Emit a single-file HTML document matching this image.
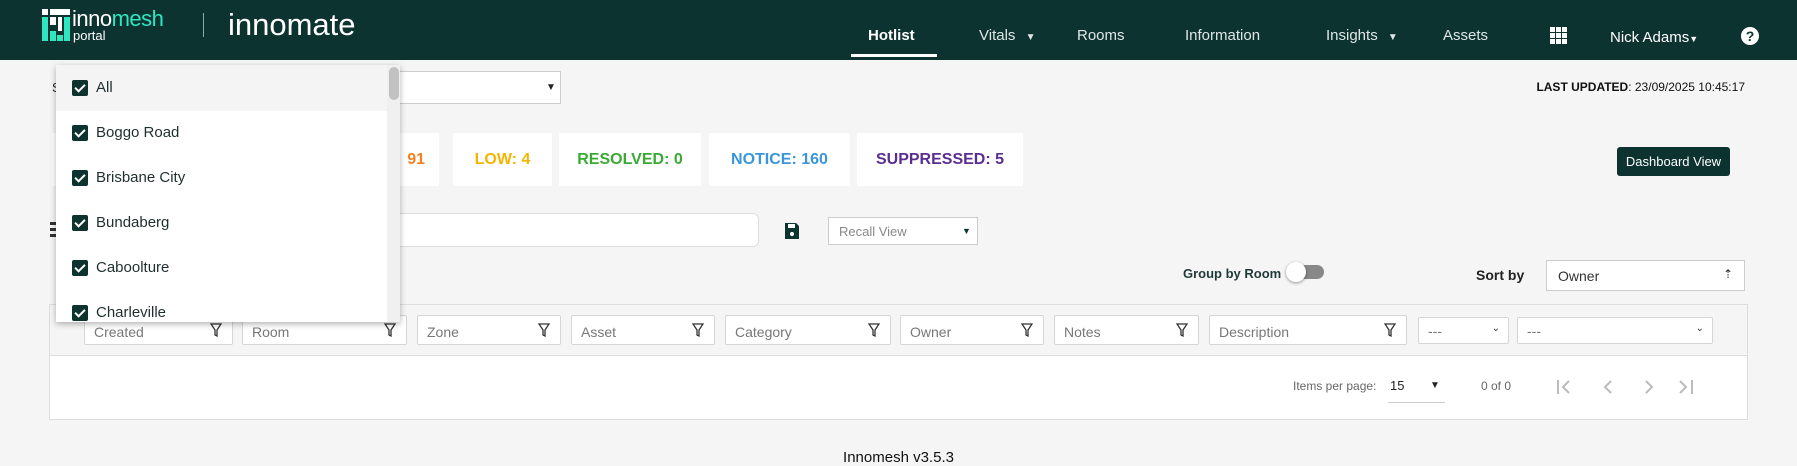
<!DOCTYPE html>
<html><head><meta charset="utf-8"><style>
*{box-sizing:border-box;margin:0;padding:0}
body{width:1797px;height:466px;background:#f5f5f5;font-family:"Liberation Sans",sans-serif;position:relative;overflow:hidden;color:#222}
.a{position:absolute}
.hdr{left:0;top:0;width:1797px;height:60px;background:#0d3331}
.nav{color:#dfe7e6;font-size:15px;top:27px}
.card{background:#fff;top:133px;height:53px;font-size:16px;font-weight:bold;display:flex;align-items:center;justify-content:center}
.fi{background:#fff;border:1px solid #d6d6d6;border-radius:2px;height:30px;top:315px;font-size:14px;color:#777;padding:8px 9px}
.fi svg{position:absolute;right:10px;top:7px}
.cb{position:absolute;left:72px;width:16px;height:16px;background:#0d3331;border-radius:2px}
.it{position:absolute;left:96px;font-size:15px;color:#1f2f2e}
</style></head><body>
<div class="a hdr"></div>
<svg class="a" style="left:42px;top:9px" width="28" height="32" viewBox="0 0 28 32"><rect x="0" y="0" width="6" height="6" fill="#fff"/><rect x="0" y="8" width="6" height="24" fill="#2ee6c0"/><rect x="8" y="0" width="20" height="6" fill="#fff"/><rect x="8" y="8" width="6" height="8" fill="#fff"/><rect x="8" y="22" width="6" height="10" fill="#2ee6c0"/><rect x="16" y="8" width="4" height="14" fill="#fff"/><rect x="22" y="8" width="6" height="24" fill="#2ee6c0"/><rect x="15" y="26" width="6" height="6" fill="#2ee6c0"/></svg>
<div class="a" style="left:72px;top:6px;font-size:22px;color:#fff;letter-spacing:-0.5px">inno<span style="color:#2ee6c0">mesh</span></div>
<div class="a" style="left:73px;top:28px;font-size:13px;color:#fff">portal</div>
<div class="a" style="left:203px;top:13px;width:1px;height:24px;background:#8aa"></div>
<div class="a" style="left:228px;top:7px;font-size:31px;color:#fff;letter-spacing:0px">innomate</div>
<div class="a nav" style="left:868px;color:#fff;font-weight:bold">Hotlist</div>
<div class="a" style="left:851px;top:54px;width:86px;height:3px;background:#fff"></div>
<div class="a nav" style="left:979px">Vitals <span style="font-size:10px;margin-left:6px">▼</span></div>
<div class="a nav" style="left:1077px">Rooms</div>
<div class="a nav" style="left:1185px">Information</div>
<div class="a nav" style="left:1326px">Insights <span style="font-size:10px;margin-left:6px">▼</span></div>
<div class="a nav" style="left:1443px">Assets</div>
<svg class="a" style="left:1550px;top:27px" width="17" height="17"><g fill="#fff"><rect x="0" y="0" width="5" height="5"/><rect x="6" y="0" width="5" height="5"/><rect x="12" y="0" width="5" height="5"/><rect x="0" y="6" width="5" height="5"/><rect x="6" y="6" width="5" height="5"/><rect x="12" y="6" width="5" height="5"/><rect x="0" y="12" width="5" height="5"/><rect x="6" y="12" width="5" height="5"/><rect x="12" y="12" width="5" height="5"/></g></svg>
<div class="a nav" style="left:1610px;top:29px;color:#fff">Nick Adams<span style="font-size:9px">▼</span></div>
<div class="a" style="left:1741px;top:27px;width:18px;height:18px;border-radius:50%;background:#fff;color:#0d3331;font-weight:bold;font-size:14px;text-align:center;line-height:18px">?</div>

<div class="a" style="left:52px;top:80px;font-size:13px">S</div>
<div class="a" style="left:380px;top:71px;width:181px;height:33px;background:#fff;border:1px solid #ccc"></div>
<div class="a" style="left:546px;top:82px;font-size:10px">▼</div>
<div class="a" style="right:52px;top:80px;font-size:12px;color:#111"><b>LAST UPDATED</b>: 23/09/2025 10:45:17</div>

<div class="a card" style="left:52px;width:387px;color:#f5821f;justify-content:flex-end;padding-right:14px">91</div>
<div class="a card" style="left:453px;width:99px;color:#f5b400">LOW: 4</div>
<div class="a card" style="left:559px;width:142px;color:#3aaa35">RESOLVED: 0</div>
<div class="a card" style="left:709px;width:141px;color:#3a96d8">NOTICE: 160</div>
<div class="a card" style="left:857px;width:166px;color:#5c2d91">SUPPRESSED: 5</div>
<div class="a" style="left:1617px;top:147px;width:113px;height:29px;background:#0d3331;border-radius:3px;color:#fff;font-size:13px;text-align:center;line-height:29px">Dashboard View</div>

<svg class="a" style="left:50px;top:222px" width="10" height="16"><g fill="#333"><rect x="0" y="0" width="10" height="3"/><rect x="0" y="6" width="10" height="3"/><rect x="0" y="12" width="10" height="3"/></g></svg>
<div class="a" style="left:60px;top:213px;width:699px;height:34px;background:#fff;border:1px solid #ddd;border-radius:6px"></div>
<svg class="a" style="left:784px;top:222px" width="16" height="18"><path d="M1 1h11l3 3v13H1z" fill="#0d3331"/><rect x="4" y="2" width="7" height="4" fill="#fff"/><circle cx="8" cy="12" r="2" fill="#fff"/></svg>
<div class="a" style="left:828px;top:217px;width:150px;height:28px;background:#fff;border:1px solid #ccc;font-size:13px;color:#888;padding:6px 10px">Recall View</div>
<div class="a" style="left:962px;top:226px;font-size:9px;color:#0d3331">▼</div>

<div class="a" style="left:1183px;top:266px;font-size:13px;font-weight:bold;color:#1f3a38">Group by Room</div>
<div class="a" style="left:1290px;top:265px;width:34px;height:14px;border-radius:7px;background:#888"></div>
<div class="a" style="left:1286px;top:262px;width:20px;height:20px;border-radius:50%;background:#fff;box-shadow:0 1px 3px rgba(0,0,0,.4)"></div>
<div class="a" style="left:1476px;top:267px;font-size:14px;font-weight:bold;color:#222">Sort by</div>
<div class="a" style="left:1546px;top:260px;width:199px;height:31px;background:#fff;border:1px solid #ccc;font-size:14px;color:#333;padding:7px 11px">Owner</div>
<div class="a" style="left:1723px;top:267px;font-size:12px;color:#333">⇡</div>

<div class="a" style="left:49px;top:304px;width:1699px;height:116px;background:#fff;border:1px solid #ddd"></div>
<div class="a" style="left:50px;top:305px;width:1697px;height:51px;background:#f5f5f5;border-bottom:1px solid #ddd"></div>
<div class="a fi" style="left:84px;width:149px">Created<svg width="12" height="14"><path d="M1 1h10L7 7v6L5 12V7z" fill="none" stroke="#333" stroke-width="1.3"/></svg></div>
<div class="a fi" style="left:242px;width:165px">Room<svg width="12" height="14"><path d="M1 1h10L7 7v6L5 12V7z" fill="none" stroke="#333" stroke-width="1.3"/></svg></div>
<div class="a fi" style="left:417px;width:144px">Zone<svg width="12" height="14"><path d="M1 1h10L7 7v6L5 12V7z" fill="none" stroke="#333" stroke-width="1.3"/></svg></div>
<div class="a fi" style="left:571px;width:144px">Asset<svg width="12" height="14"><path d="M1 1h10L7 7v6L5 12V7z" fill="none" stroke="#333" stroke-width="1.3"/></svg></div>
<div class="a fi" style="left:725px;width:166px">Category<svg width="12" height="14"><path d="M1 1h10L7 7v6L5 12V7z" fill="none" stroke="#333" stroke-width="1.3"/></svg></div>
<div class="a fi" style="left:900px;width:144px">Owner<svg width="12" height="14"><path d="M1 1h10L7 7v6L5 12V7z" fill="none" stroke="#333" stroke-width="1.3"/></svg></div>
<div class="a fi" style="left:1054px;width:145px">Notes<svg width="12" height="14"><path d="M1 1h10L7 7v6L5 12V7z" fill="none" stroke="#333" stroke-width="1.3"/></svg></div>
<div class="a fi" style="left:1209px;width:198px">Description<svg width="12" height="14"><path d="M1 1h10L7 7v6L5 12V7z" fill="none" stroke="#333" stroke-width="1.3"/></svg></div>
<div class="a fi" style="left:1418px;width:91px;top:317px;height:27px;padding:5px 9px">---<span style="position:absolute;right:8px;font-size:10px;color:#333">⌄</span></div>
<div class="a fi" style="left:1517px;width:196px;top:317px;height:27px;padding:5px 9px">---<span style="position:absolute;right:8px;font-size:10px;color:#333">⌄</span></div>

<div class="a" style="left:1293px;top:379px;font-size:12px;color:#666">Items per page:</div>
<div class="a" style="left:1390px;top:378px;font-size:13px;color:#222">15</div>
<div class="a" style="left:1430px;top:380px;font-size:10px;color:#222">▼</div>
<div class="a" style="left:1388px;top:402px;width:57px;height:1px;background:#ccc"></div>
<div class="a" style="left:1481px;top:379px;font-size:12px;color:#666">0 of 0</div>
<svg class="a" style="left:1556px;top:378px" width="140" height="18" fill="none" stroke="#bbb" stroke-width="2"><path d="M2 2v14M13 3l-6 6 6 6"/><path d="M55 3l-6 6 6 6"/><path d="M90 3l6 6-6 6"/><path d="M124 3l6 6-6 6M136 2v14"/></svg>

<div class="a" style="left:0;width:1797px;top:449px;text-align:center;font-size:15px;color:#111">Innomesh v3.5.3</div>

<div class="a" style="left:56px;top:65px;width:344px;height:257px;background:#fff;box-shadow:0 2px 6px rgba(0,0,0,.3);overflow:hidden">
<div class="a" style="left:0;top:0;width:331px;height:46px;background:#f4f4f4"></div>
<div class="a" style="left:331px;top:0;width:13px;height:257px;background:#f0f0f0"></div>
<div class="a" style="left:333px;top:2px;width:10px;height:33px;border-radius:5px;background:#c1c1c1"></div>
</div>
<div class="cb" style="top:80px"></div><div class="it" style="top:79px">All</div>
<div class="cb" style="top:125px"></div><div class="it" style="top:124px">Boggo Road</div>
<div class="cb" style="top:170px"></div><div class="it" style="top:169px">Brisbane City</div>
<div class="cb" style="top:215px"></div><div class="it" style="top:214px">Bundaberg</div>
<div class="cb" style="top:260px"></div><div class="it" style="top:259px">Caboolture</div>
<div class="cb" style="top:305px"></div><div class="it" style="top:304px">Charleville</div>
<style>.cb::after{content:"";position:absolute;left:5px;top:2px;width:4px;height:8px;border:solid #fff;border-width:0 2px 2px 0;transform:rotate(45deg)}</style>
</body></html>
